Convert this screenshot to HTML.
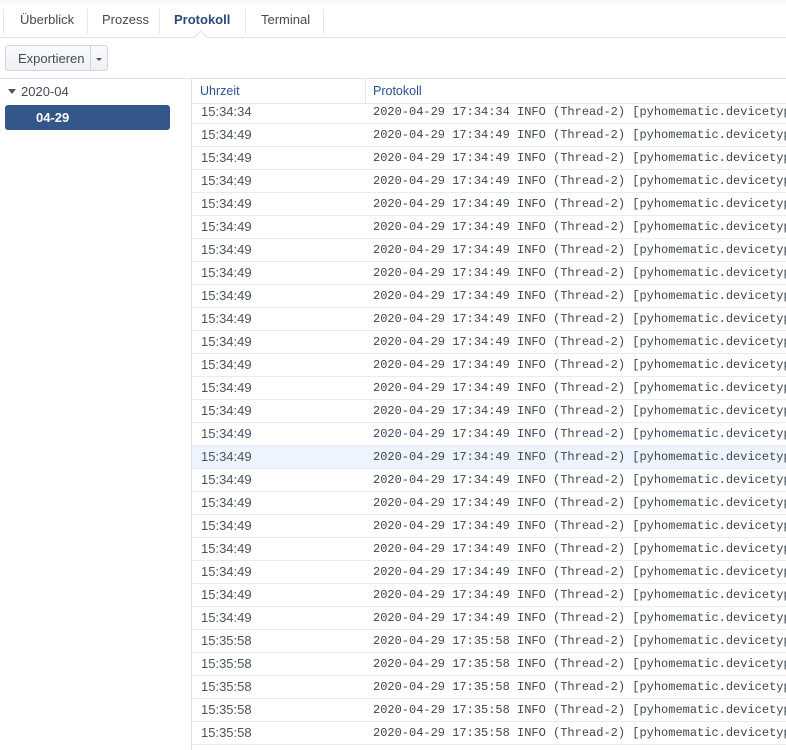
<!DOCTYPE html>
<html><head><style>
*{margin:0;padding:0;box-sizing:border-box}
html,body{width:786px;height:750px;overflow:hidden}
body{background:#fff;font-family:"Liberation Sans",sans-serif;position:relative;color:#414b55}
.a{position:absolute}
.tab{position:absolute;top:12px;font-size:13px;color:#414b55}
.sep{position:absolute;top:9px;width:1px;height:25px;background:#e4e8ee}
#rows{position:absolute;left:192px;top:104px;width:594px;height:646px;overflow:hidden}
.row{position:relative;width:594px;height:23px;border-bottom:1px solid #e8ecf1;font-size:13px;overflow:hidden}
.row .t{position:absolute;left:9px;top:3px;color:#4a535c}
.row .p{position:absolute;left:181px;top:4px;font-family:"Liberation Mono",monospace;font-size:12px;white-space:nowrap;color:#3e464f}
.r0{height:20px}
.r0 .t,.r0 .p{margin-top:-3px}
.hl{background:#edf4fd}
</style></head><body>
<div class="a" style="left:0;top:0;width:786px;height:6px;background:linear-gradient(#f4f6f9,#fff)"></div>
<div class="sep" style="left:3px"></div>
<div class="sep" style="left:87px"></div>
<div class="sep" style="left:159px"></div>
<div class="sep" style="left:245px"></div>
<div class="sep" style="left:323px"></div>
<div class="tab" style="left:20px">Überblick</div>
<div class="tab" style="left:102px">Prozess</div>
<div class="tab" style="left:174px;font-weight:bold;color:#2a4a7a">Protokoll</div>
<div class="tab" style="left:261px">Terminal</div>
<div class="a" style="left:0;top:37px;width:786px;height:1px;background:#dfe3e8"></div>
<div class="a" style="left:196px;top:32px;width:9px;height:9px;background:#fff;border-left:1px solid #dfe3e8;border-top:1px solid #dfe3e8;transform:rotate(45deg)"></div>
<div class="a" style="left:5px;top:45px;width:103px;height:26px;border:1px solid #cfd6de;border-radius:3px;background:linear-gradient(#f9fafc,#eef1f5)"></div>
<div class="a" style="left:90px;top:46px;width:1px;height:24px;background:#cfd6de"></div>
<div class="a" style="left:18px;top:51px;font-size:13px;color:#414b55">Exportieren</div>
<div class="a" style="left:96px;top:58px;width:0;height:0;border-left:3px solid transparent;border-right:3px solid transparent;border-top:3px solid #555"></div>
<div class="a" style="left:0;top:78px;width:786px;height:1px;background:#dfe3e8"></div>
<div class="a" style="left:191px;top:79px;width:1px;height:671px;background:#dfe3e8"></div>
<div class="a" style="left:8px;top:89px;width:0;height:0;border-left:4px solid transparent;border-right:4px solid transparent;border-top:5px solid #555"></div>
<div class="a" style="left:21px;top:84px;font-size:13px;color:#414b55">2020-04</div>
<div class="a" style="left:5px;top:105px;width:165px;height:25px;background:#34578a;border-radius:3px;color:#fff;font-size:13px;font-weight:bold;padding:5px 0 0 31px">04-29</div>
<div class="a" style="left:192px;top:79px;width:594px;height:25px;border-bottom:1px solid #e3e7ec;background:#fff"></div>
<div class="a" style="left:365px;top:79px;width:1px;height:25px;background:#e3e7ec"></div>
<div class="a" style="left:200px;top:84px;font-size:12.5px;color:#2a5190">Uhrzeit</div>
<div class="a" style="left:373px;top:84px;font-size:12.5px;color:#2a5190">Protokoll</div>
<div id="rows">
<div class="row r0"><div class="t">15:34:34</div><div class="p">2020-04-29 17:34:34 INFO (Thread-2) [pyhomematic.devicetypes.generic]</div></div>
<div class="row"><div class="t">15:34:49</div><div class="p">2020-04-29 17:34:49 INFO (Thread-2) [pyhomematic.devicetypes.generic]</div></div>
<div class="row"><div class="t">15:34:49</div><div class="p">2020-04-29 17:34:49 INFO (Thread-2) [pyhomematic.devicetypes.generic]</div></div>
<div class="row"><div class="t">15:34:49</div><div class="p">2020-04-29 17:34:49 INFO (Thread-2) [pyhomematic.devicetypes.generic]</div></div>
<div class="row"><div class="t">15:34:49</div><div class="p">2020-04-29 17:34:49 INFO (Thread-2) [pyhomematic.devicetypes.generic]</div></div>
<div class="row"><div class="t">15:34:49</div><div class="p">2020-04-29 17:34:49 INFO (Thread-2) [pyhomematic.devicetypes.generic]</div></div>
<div class="row"><div class="t">15:34:49</div><div class="p">2020-04-29 17:34:49 INFO (Thread-2) [pyhomematic.devicetypes.generic]</div></div>
<div class="row"><div class="t">15:34:49</div><div class="p">2020-04-29 17:34:49 INFO (Thread-2) [pyhomematic.devicetypes.generic]</div></div>
<div class="row"><div class="t">15:34:49</div><div class="p">2020-04-29 17:34:49 INFO (Thread-2) [pyhomematic.devicetypes.generic]</div></div>
<div class="row"><div class="t">15:34:49</div><div class="p">2020-04-29 17:34:49 INFO (Thread-2) [pyhomematic.devicetypes.generic]</div></div>
<div class="row"><div class="t">15:34:49</div><div class="p">2020-04-29 17:34:49 INFO (Thread-2) [pyhomematic.devicetypes.generic]</div></div>
<div class="row"><div class="t">15:34:49</div><div class="p">2020-04-29 17:34:49 INFO (Thread-2) [pyhomematic.devicetypes.generic]</div></div>
<div class="row"><div class="t">15:34:49</div><div class="p">2020-04-29 17:34:49 INFO (Thread-2) [pyhomematic.devicetypes.generic]</div></div>
<div class="row"><div class="t">15:34:49</div><div class="p">2020-04-29 17:34:49 INFO (Thread-2) [pyhomematic.devicetypes.generic]</div></div>
<div class="row"><div class="t">15:34:49</div><div class="p">2020-04-29 17:34:49 INFO (Thread-2) [pyhomematic.devicetypes.generic]</div></div>
<div class="row hl"><div class="t">15:34:49</div><div class="p">2020-04-29 17:34:49 INFO (Thread-2) [pyhomematic.devicetypes.generic]</div></div>
<div class="row"><div class="t">15:34:49</div><div class="p">2020-04-29 17:34:49 INFO (Thread-2) [pyhomematic.devicetypes.generic]</div></div>
<div class="row"><div class="t">15:34:49</div><div class="p">2020-04-29 17:34:49 INFO (Thread-2) [pyhomematic.devicetypes.generic]</div></div>
<div class="row"><div class="t">15:34:49</div><div class="p">2020-04-29 17:34:49 INFO (Thread-2) [pyhomematic.devicetypes.generic]</div></div>
<div class="row"><div class="t">15:34:49</div><div class="p">2020-04-29 17:34:49 INFO (Thread-2) [pyhomematic.devicetypes.generic]</div></div>
<div class="row"><div class="t">15:34:49</div><div class="p">2020-04-29 17:34:49 INFO (Thread-2) [pyhomematic.devicetypes.generic]</div></div>
<div class="row"><div class="t">15:34:49</div><div class="p">2020-04-29 17:34:49 INFO (Thread-2) [pyhomematic.devicetypes.generic]</div></div>
<div class="row"><div class="t">15:34:49</div><div class="p">2020-04-29 17:34:49 INFO (Thread-2) [pyhomematic.devicetypes.generic]</div></div>
<div class="row"><div class="t">15:35:58</div><div class="p">2020-04-29 17:35:58 INFO (Thread-2) [pyhomematic.devicetypes.generic]</div></div>
<div class="row"><div class="t">15:35:58</div><div class="p">2020-04-29 17:35:58 INFO (Thread-2) [pyhomematic.devicetypes.generic]</div></div>
<div class="row"><div class="t">15:35:58</div><div class="p">2020-04-29 17:35:58 INFO (Thread-2) [pyhomematic.devicetypes.generic]</div></div>
<div class="row"><div class="t">15:35:58</div><div class="p">2020-04-29 17:35:58 INFO (Thread-2) [pyhomematic.devicetypes.generic]</div></div>
<div class="row"><div class="t">15:35:58</div><div class="p">2020-04-29 17:35:58 INFO (Thread-2) [pyhomematic.devicetypes.generic]</div></div>
<div class="row"><div class="t">15:35:58</div><div class="p">2020-04-29 17:35:58 INFO (Thread-2) [pyhomematic.devicetypes.generic]</div></div>
</div>
</body></html>
